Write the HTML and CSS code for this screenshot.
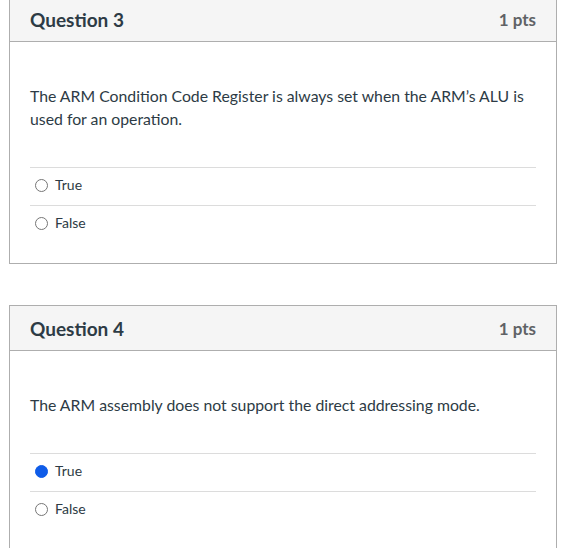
FILE: index.html
```html
<!DOCTYPE html>
<html>
<head>
<meta charset="utf-8">
<link rel="stylesheet" href="styles.css">
</head>
<body>
<div class="page">
  <div class="question">
    <div class="q-header">
      <span class="q-title">Question 3</span>
      <span class="q-pts">1 pts</span>
    </div>
    <div class="q-body">
      <div class="q-text">The ARM Condition Code Register is always set when the ARM’s ALU is used for an operation.</div>
      <div class="answers">
        <div class="answer"><span class="radio"></span><span class="label">True</span></div>
        <div class="answer"><span class="radio"></span><span class="label">False</span></div>
      </div>
    </div>
  </div>
  <div class="question">
    <div class="q-header">
      <span class="q-title">Question 4</span>
      <span class="q-pts">1 pts</span>
    </div>
    <div class="q-body">
      <div class="q-text">The ARM assembly does not support the direct addressing mode.</div>
      <div class="answers">
        <div class="answer"><span class="radio checked"></span><span class="label">True</span></div>
        <div class="answer"><span class="radio"></span><span class="label">False</span></div>
      </div>
    </div>
  </div>
</div>
</body>
</html>
```
FILE: styles.css
```css
html, body {
  margin: 0;
  padding: 0;
  background: #fff;
}
body {
  font-family: Lato, "Noto Sans", sans-serif;
  color: #2d3b45;
  overflow: hidden;
}
.page {
  margin-top: -4px;
  padding-left: 9px;
  width: 548px;
  display: flex;
  flex-direction: column;
  gap: 41px;
}
.question {
  border: 1px solid #aeaeae;
  background: #fff;
}
.q-header {
  height: 44px;
  background: #f5f5f5;
  border-bottom: 1px solid #aeaeae;
  display: flex;
  align-items: center;
  justify-content: space-between;
  padding: 0 20px;
}
.q-title {
  font-size: 19px;
  font-weight: 700;
  color: #2d3b45;
}
.q-pts {
  font-size: 17px;
  font-weight: 700;
  color: #5f6266;
}
.q-body {
  padding: 42px 20px 20px 20px;
}
.q-text {
  font-size: 15.8px;
  line-height: 23px;
  margin-bottom: 37px;
}
.answer {
  border-top: 1px solid #dcdcdc;
  display: flex;
  align-items: center;
  padding: 8px 0 11px 5px;
  line-height: 18px;
}
.radio {
  width: 11px;
  height: 11px;
  border: 1px solid #767676;
  border-radius: 50%;
  box-sizing: content-box;
  margin-right: 7px;
}
.radio.checked {
  background: #0f5ce8;
  border-color: #0f5ce8;
}
.label {
  font-size: 14px;
  color: #2d3b45;
}
```
